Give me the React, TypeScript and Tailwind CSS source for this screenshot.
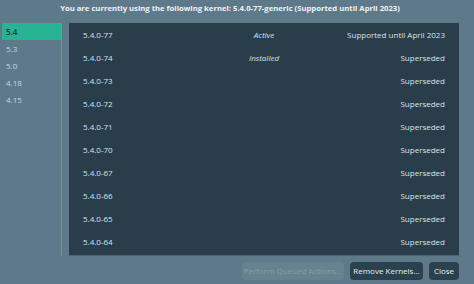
import React from "react";

const branches = ["5.4", "5.3", "5.0", "4.18", "4.15"];

const kernels = [
  { version: "5.4.0-77", state: "Active", support: "Supported until April 2023" },
  { version: "5.4.0-74", state: "Installed", support: "Superseded" },
  { version: "5.4.0-73", state: "", support: "Superseded" },
  { version: "5.4.0-72", state: "", support: "Superseded" },
  { version: "5.4.0-71", state: "", support: "Superseded" },
  { version: "5.4.0-70", state: "", support: "Superseded" },
  { version: "5.4.0-67", state: "", support: "Superseded" },
  { version: "5.4.0-66", state: "", support: "Superseded" },
  { version: "5.4.0-65", state: "", support: "Superseded" },
  { version: "5.4.0-64", state: "", support: "Superseded" },
];

export default function App() {
  return (
    <div
      className="w-[474px] h-[284px] bg-[#5e7a8a] flex flex-col overflow-hidden text-[#dbe3e8]"
      style={{ fontFamily: '"Open Sans", "Noto Sans", sans-serif' }}
    >
      <div className="h-[23px] pt-[1px] text-center text-[7.7px] font-bold text-[#eef2f4] leading-[14px] pr-[14px]">
        You are currently using the following kernel: 5.4.0-77-generic (Supported until April 2023)
      </div>

      <div className="flex h-[233px]">
        <div className="w-[62px] pl-[2px] border-r border-[#7791a0]">
          {branches.map((b, i) => (
            <div
              key={b}
              className={
                i === 0
                  ? "h-[17px] pl-[4px] flex items-center text-[8px] bg-[#28b492] text-[#1c3a3a] font-semibold"
                  : "h-[17px] pl-[4px] flex items-center text-[8px] text-[#c9d6dd]"
              }
            >
              {b}
            </div>
          ))}
        </div>

        <div className="ml-[7px] w-[390px] bg-[#2a3d4a] border-b border-[#4b6573]">
          {kernels.map((k) => (
            <div key={k.version} className="h-[23px] flex items-center text-[8px]">
              <div className="w-[160px] pl-[14px]">{k.version}</div>
              <div className="w-[70px] text-center italic">{k.state}</div>
              <div className="flex-1 text-right pr-[14px]">{k.support}</div>
            </div>
          ))}
        </div>
      </div>

      <div className="flex justify-end items-center gap-[6px] pr-[15px] pt-[6px] text-[8px]">
        <div className="h-[18px] w-[102px] rounded-[4px] bg-[#67828f] text-[#849dab] flex items-center justify-center">
          Perform Queued Actions...
        </div>
        <div className="h-[18px] w-[73px] rounded-[4px] bg-[#2c414e] text-[#e6edf0] flex items-center justify-center">
          Remove Kernels...
        </div>
        <div className="h-[18px] w-[30px] rounded-[4px] bg-[#2c414e] text-[#e6edf0] flex items-center justify-center">
          Close
        </div>
      </div>
    </div>
  );
}
